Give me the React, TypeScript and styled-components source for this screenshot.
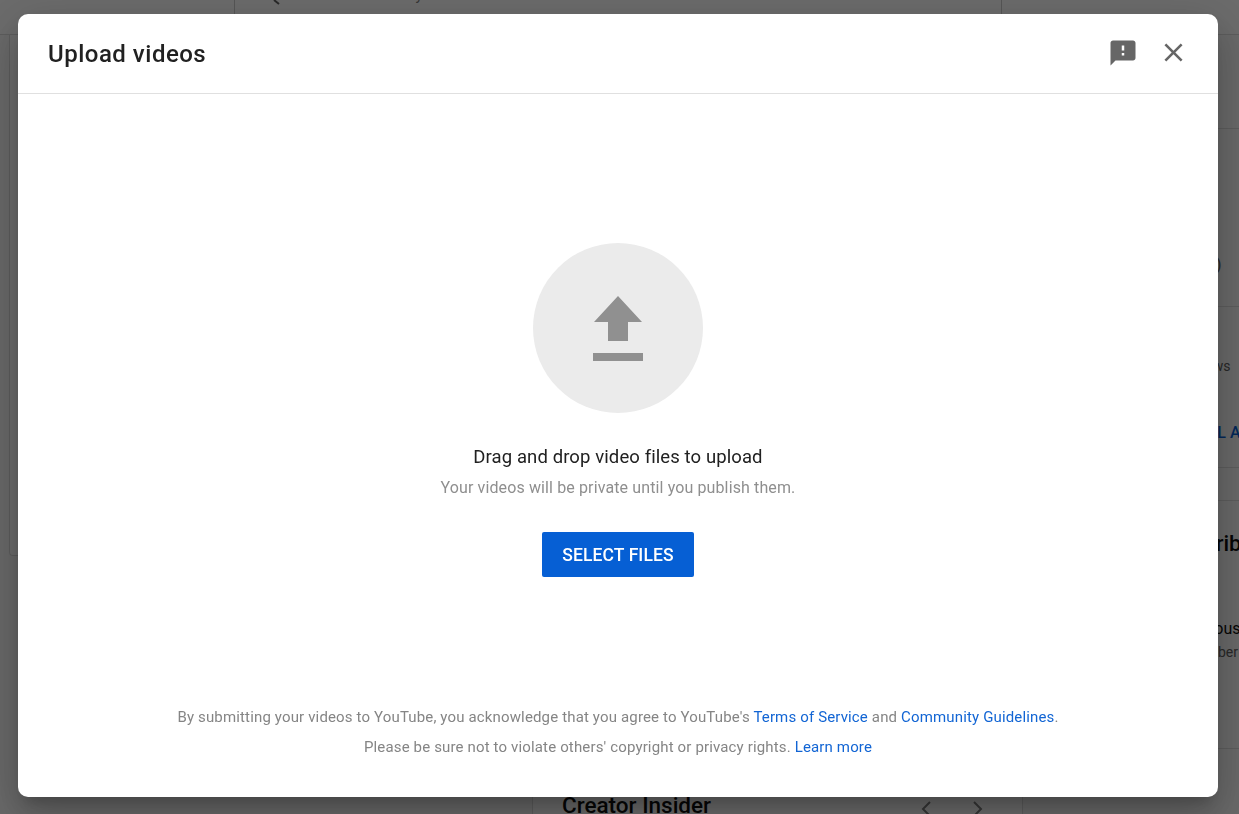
import React from 'react';
import styled, { createGlobalStyle } from 'styled-components';

const GlobalStyle = createGlobalStyle`
  html, body {
    margin: 0;
    height: 100%;
    overflow: hidden;
    background: #f9f9f9;
    font-family: Roboto, "Liberation Sans", sans-serif;
  }
`;

const Page = styled.div`
  width: 1239px;
  height: 814px;
  overflow: hidden;
  display: flex;
  flex-direction: column;
`;

const TopBar = styled.header`
  flex: 0 0 35px;
  box-sizing: border-box;
  background: #fff;
  border-bottom: 1px solid #ddd;
  padding-left: 234px;
`;

const SearchBox = styled.div`
  width: 768px;
  height: 34px;
  box-sizing: border-box;
  border: 1px solid #ccc;
  border-top: 0;
  padding-left: 36px;
  color: #606060;
  display: flex;
  align-items: flex-start;
  overflow: hidden;
`;

const SearchHint = styled.span`
  margin: -13px 0 0 32px;
  font-size: 15px;
  line-height: 16px;
  color: #808080;
`;

const Dashboard = styled.main`
  flex: 1;
  min-height: 0;
  display: flex;
  padding-left: 9px;
`;

const SideCard = styled.section`
  width: 200px;
  height: 520px;
  border: 1px solid #ddd;
  border-top: 0;
  border-radius: 0 0 4px 4px;
  background: #fff;
`;

const MiddleColumn = styled.div`
  width: 491px;
  margin-left: 321px;
  display: flex;
  flex-direction: column;
  justify-content: flex-end;
`;

const NewsCard = styled.section`
  height: 34px;
  box-sizing: border-box;
  padding: 11px 0 0 29px;
  border: 1px solid #ddd;
  border-bottom: 0;
  background: #fff;
  overflow: hidden;
  display: flex;
  align-items: flex-start;
`;

const NewsTitle = styled.h2`
  margin: 0;
  font-size: 22.5px;
  line-height: 26px;
  font-weight: 500;
  color: #0d0d0d;
  flex: 1;
  white-space: nowrap;
`;

const NewsArrows = styled.div`
  display: flex;
  gap: 26px;
  padding: 5px 33px 0 0;
  color: #808080;
`;

const RightColumn = styled.div`
  flex: 1;
  min-width: 0;
  display: flex;
  flex-direction: column;
  overflow: hidden;
`;

const RightRow = styled.div<{ $height: number; $line?: boolean }>`
  flex: 0 0 ${(p) => p.$height}px;
  box-sizing: border-box;
  border-bottom: ${(p) => (p.$line ? '1px solid #ddd' : '0')};
  white-space: nowrap;
  display: flex;
  align-items: flex-end;
`;

const RightText = styled.span<{ $indent: number; $size: number; $color: string; $weight?: number; $drop?: number }>`
  margin-left: ${(p) => p.$indent}px;
  margin-bottom: ${(p) => p.$drop ?? 0}px;
  font-size: ${(p) => p.$size}px;
  font-weight: ${(p) => p.$weight ?? 400};
  color: ${(p) => p.$color};
`;

const Backdrop = styled.div`
  position: fixed;
  inset: 0;
  background: rgba(0, 0, 0, 0.58);
`;

const Modal = styled.div`
  position: fixed;
  left: 18px;
  top: 14px;
  width: 1200px;
  height: 783px;
  background: #fff;
  border-radius: 10px;
  box-shadow: 0 11px 15px -7px rgba(0, 0, 0, 0.2), 0 24px 38px 3px rgba(0, 0, 0, 0.14), 0 9px 46px 8px rgba(0, 0, 0, 0.12);
  display: flex;
  flex-direction: column;
`;

const ModalHeader = styled.div`
  flex: 0 0 80px;
  box-sizing: border-box;
  border-bottom: 1px solid #e0e0e0;
  display: flex;
  align-items: center;
  padding: 0 29px 0 30px;
`;

const ModalTitle = styled.h1`
  flex: 1;
  margin: 0;
  font-size: 24px;
  font-weight: 500;
  letter-spacing: 0.5px;
  color: #212121;
`;

const HeaderIcons = styled.div`
  display: flex;
  gap: 18px;
  margin-top: -2px;
  color: #666;
`;

const IconButton = styled.button`
  width: 32px;
  height: 32px;
  padding: 0;
  border: 0;
  background: none;
  color: inherit;
  display: flex;
  align-items: center;
  justify-content: center;
`;

const ModalBody = styled.div`
  flex: 1;
  display: flex;
  flex-direction: column;
  align-items: center;
  padding-top: 149px;
`;

const UploadCircle = styled.div`
  width: 170px;
  height: 170px;
  border-radius: 50%;
  background: #ebebeb;
  display: flex;
  align-items: center;
  justify-content: center;
  color: #909090;
`;

const DropTitle = styled.div`
  margin-top: 32px;
  font-size: 18.5px;
  letter-spacing: 0.1px;
  line-height: 24px;
  color: #212121;
`;

const DropHint = styled.div`
  margin-top: 9px;
  font-size: 16px;
  letter-spacing: 0.12px;
  line-height: 20px;
  color: #8f8f8f;
`;

const SelectButton = styled.button`
  margin-top: 34px;
  width: 152px;
  height: 45px;
  border: 0;
  border-radius: 2px;
  background: #065fd4;
  color: #fff;
  font-family: inherit;
  font-size: 17.5px;
  letter-spacing: 0.1px;
  font-weight: 500;
`;

const Legal = styled.footer`
  margin-top: auto;
  padding-bottom: 35px;
  text-align: center;
  font-size: 15px;
  letter-spacing: 0.15px;
  line-height: 30px;
  color: #858585;
`;

const LegalLink = styled.a`
  color: #1265d4;
  text-decoration: none;
`;

const FeedbackIcon = () => (
  <svg width="30" height="30" viewBox="0 0 24 24" fill="currentColor">
    <path d="M20 2H4c-1.1 0-1.99.9-1.99 2L2 22l4-4h14c1.1 0 2-.9 2-2V4c0-1.1-.9-2-2-2zm-7 12h-2v-2h2v2zm0-4h-2V6h2v4z" />
  </svg>
);

const CloseIcon = () => (
  <svg width="31" height="31" viewBox="0 0 24 24" fill="currentColor">
    <path d="M19 6.41 17.59 5 12 10.59 6.41 5 5 6.41 10.59 12 5 17.59 6.41 19 12 13.41 17.59 19 19 17.59 13.41 12z" />
  </svg>
);

const UploadIcon = () => (
  <svg width="60" height="68" viewBox="0 0 60 68" fill="currentColor">
    <path d="M30 2 54 28H40V47H20V28H6z" />
    <rect x="5" y="59" width="50" height="8" />
  </svg>
);

const SearchGlyph = () => (
  <svg width="14" height="6" viewBox="0 0 14 6" fill="none" stroke="currentColor" strokeWidth="2" style={{ display: 'block', flex: 'none' }}>
    <path d="M3 0l5 4" />
  </svg>
);

const Chevron = ({ flip }: { flip?: boolean }) => (
  <svg width="24" height="24" viewBox="0 0 24 24" fill="none" stroke="currentColor" strokeWidth="2" style={flip ? { transform: 'scaleX(-1)' } : undefined}>
    <path d="M15 5l-7 7 7 7" />
  </svg>
);

export default function App() {
  return (
    <>
      <GlobalStyle />
      <Page>
        <TopBar>
          <SearchBox>
            <SearchGlyph />
            <SearchHint>Search across your channel</SearchHint>
          </SearchBox>
        </TopBar>
        <Dashboard>
          <SideCard />
          <MiddleColumn>
            <NewsCard>
              <NewsTitle>Creator Insider</NewsTitle>
              <NewsArrows>
                <Chevron />
                <Chevron flip />
              </NewsArrows>
            </NewsCard>
          </MiddleColumn>
          <RightColumn>
            <RightRow $height={94} $line />
            <RightRow $height={178} $line>
              <RightText $indent={193} $size={16} $color="#606060" $drop={32}>)</RightText>
            </RightRow>
            <RightRow $height={67}>
              <RightText $indent={170} $size={14} $color="#606060">Views</RightText>
            </RightRow>
            <RightRow $height={94} $line>
              <RightText $indent={80} $size={16} $weight={500} $color="#065fd4" $drop={25}>GO TO CHANNEL ANALYTICS</RightText>
            </RightRow>
            <RightRow $height={33} $line />
            <RightRow $height={55}>
              <RightText $indent={132} $size={22} $weight={500} $color="#0d0d0d">Subscribers</RightText>
            </RightRow>
            <RightRow $height={82}>
              <RightText $indent={160} $size={16} $color="#0d0d0d">Famous</RightText>
            </RightRow>
            <RightRow $height={22}>
              <RightText $indent={165} $size={14} $color="#606060">Number</RightText>
            </RightRow>
            <RightRow $height={89} $line />
          </RightColumn>
        </Dashboard>
      </Page>
      <Backdrop />
      <Modal>
        <ModalHeader>
          <ModalTitle>Upload videos</ModalTitle>
          <HeaderIcons>
            <IconButton aria-label="Send feedback"><FeedbackIcon /></IconButton>
            <IconButton aria-label="Close"><CloseIcon /></IconButton>
          </HeaderIcons>
        </ModalHeader>
        <ModalBody>
          <UploadCircle><UploadIcon /></UploadCircle>
          <DropTitle>Drag and drop video files to upload</DropTitle>
          <DropHint>Your videos will be private until you publish them.</DropHint>
          <SelectButton>SELECT FILES</SelectButton>
          <Legal>
            By submitting your videos to YouTube, you acknowledge that you agree to YouTube's{' '}
            <LegalLink href="#">Terms of Service</LegalLink> and <LegalLink href="#">Community Guidelines</LegalLink>.
            <br />
            Please be sure not to violate others' copyright or privacy rights. <LegalLink href="#">Learn more</LegalLink>
          </Legal>
        </ModalBody>
      </Modal>
    </>
  );
}
